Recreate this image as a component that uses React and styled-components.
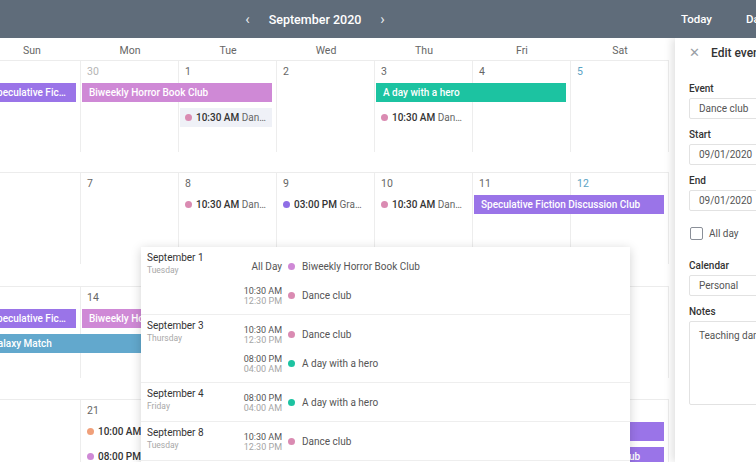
import React from 'react';
import styled, { createGlobalStyle } from 'styled-components';

const GlobalStyle = createGlobalStyle`
  html, body {
    margin: 0;
    padding: 0;
    background: #fff;
    font-family: Roboto, "Liberation Sans", Arial, sans-serif;
  }
  * {
    box-sizing: border-box;
  }
`;

const COLORS = {
  orchid: '#cf89d6',
  purple: '#9a74e8',
  green: '#1cc3a1',
  blue: '#62a8cd',
  pink: '#da8bb2',
  violet: '#8f6ee6',
  orange: '#f0a07a',
};

const Page = styled.div`
  width: 756px;
  height: 462px;
  overflow: hidden;
  position: relative;
  display: flex;
  flex-direction: column;
`;

const Header = styled.div`
  height: 38px;
  flex-shrink: 0;
  background-color: #5f6c7a;
  color: #fff;
  display: grid;
  grid-template-columns: 630px auto;
  align-items: center;
`;

const Nav = styled.div`
  justify-self: center;
  display: flex;
  align-items: center;
  gap: 15px;
`;

const NavArrow = styled.button`
  background: transparent;
  border: none;
  color: #e6eaee;
  font-family: inherit;
  font-size: 15px;
  padding: 0 4px;
  cursor: pointer;
  line-height: 1;
`;

const MonthTitle = styled.div`
  font-size: 12.5px;
  font-weight: 500;
`;

const ViewSwitch = styled.div`
  display: flex;
  gap: 34px;
  padding-left: 51px;
  white-space: nowrap;
`;

const HeaderButton = styled.span`
  font-size: 11.5px;
  font-weight: 500;
`;

const Body = styled.div`
  flex: 1;
  display: flex;
  overflow: hidden;
`;

const CalendarArea = styled.div`
  width: 675px;
  flex-shrink: 0;
  overflow: hidden;
`;

const Weeks = styled.div`
  margin-left: -17px;
  width: 686px;
`;

const DayNames = styled.div`
  display: grid;
  grid-template-columns: repeat(7, 98px);
  height: 23px;
  padding-top: 2px;
  border-bottom: 1px solid #ececec;
  align-items: center;
`;

const DayName = styled.div`
  text-align: center;
  font-size: 10.5px;
  color: #666;
`;

const WeekRow = styled.div`
  display: grid;
  grid-template-columns: repeat(7, 98px);
  grid-template-rows: 16px 19px 19px 19px;
  row-gap: 6px;
  height: ${(p) => p.height}px;
  border-bottom: 1px solid #ececec;
`;

const DayCell = styled.div`
  grid-column: ${(p) => p.col};
  grid-row: 1 / -1;
  border-right: 1px solid #ededed;
  padding: 4px 0 0 6px;
  font-size: 10.5px;
  color: ${(p) => (p.muted ? '#b5b5b5' : p.weekend ? '#5ba3c4' : '#666')};
`;

const EventBar = styled.div`
  grid-column: ${(p) => p.col} / span ${(p) => p.span || 1};
  grid-row: ${(p) => p.lane + 1};
  margin: 0 5px 0 1px;
  background-color: ${(p) => p.color};
  color: #fff;
  font-size: 10px;
  font-weight: 500;
  line-height: 19px;
  padding: 0 7px;
  white-space: nowrap;
  overflow: hidden;
  text-overflow: ellipsis;
  z-index: 1;
`;

const DotEvent = styled.div`
  grid-column: ${(p) => p.col};
  grid-row: ${(p) => p.lane + 1};
  margin: 0 5px 0 1px;
  padding: 0 4px 0 5px;
  background-color: ${(p) => (p.selected ? '#eff1f7' : 'transparent')};
  display: flex;
  align-items: center;
  gap: 4px;
  font-size: 10px;
  line-height: 19px;
  white-space: nowrap;
  overflow: hidden;
  z-index: 1;
`;

const Dot = styled.span`
  width: ${(p) => p.size || 7}px;
  height: ${(p) => p.size || 7}px;
  border-radius: 50%;
  background-color: ${(p) => p.color};
  flex-shrink: 0;
`;

const DotText = styled.span`
  overflow: hidden;
  text-overflow: ellipsis;
  color: #666;

  b {
    font-weight: 500;
    color: #333;
  }
`;

const Panel = styled.div`
  width: 260px;
  flex-shrink: 0;
  background: #fff;
  box-shadow: -3px 0 8px rgba(0, 0, 0, 0.12);
  padding: 6px 0 0 14px;
  z-index: 3;
  white-space: nowrap;
`;

const PanelTitle = styled.div`
  display: flex;
  align-items: center;
  gap: 11px;
  height: 17px;
  font-size: 12px;
  font-weight: 500;
  color: #333;
  margin-bottom: 21px;
`;

const CloseIcon = styled.span`
  color: #9aa0a6;
  font-size: 13px;
  font-weight: 300;
`;

const Field = styled.div`
  margin-bottom: ${(p) => p.gap ?? 9}px;
`;

const Label = styled.div`
  font-size: 10px;
  line-height: 13px;
  font-weight: 500;
  color: #333;
  margin-bottom: 3px;
`;

const Input = styled.div`
  height: ${(p) => p.height || 21}px;
  border: 1px solid #e2e2e2;
  border-radius: 2px;
  padding: ${(p) => (p.height ? '4px 9px' : '0 9px')};
  line-height: 19px;
  font-size: 10px;
  color: #555;
  width: 240px;
`;

const CheckRow = styled.label`
  display: flex;
  align-items: center;
  gap: 6px;
  font-size: 10px;
  color: #555;
  margin: 16px 0 19px 1px;
`;

const CheckBox = styled.span`
  width: 13px;
  height: 13px;
  border: 1.5px solid #8a8f98;
  border-radius: 2px;
`;

const Popup = styled.div`
  position: absolute;
  left: 141px;
  top: 247px;
  width: 489px;
  height: 240px;
  background: #fff;
  box-shadow: 0 2px 10px rgba(0, 0, 0, 0.18);
  z-index: 2;
`;

const DayGroup = styled.div`
  display: flex;
  padding: 5px 0 4px;
  border-bottom: 1px solid #eeeeee;
`;

const DateColumn = styled.div`
  width: 90px;
  padding: 0 0 0 6px;
  flex-shrink: 0;
`;

const DateTitle = styled.div`
  font-size: 10px;
  color: #333;
  line-height: 12px;
`;

const WeekDay = styled.div`
  font-size: 8.5px;
  color: #a8a8a8;
  line-height: 12px;
`;

const AgendaList = styled.div`
  display: flex;
  flex-direction: column;
`;

const AgendaRow = styled.div`
  height: 29px;
  display: flex;
  align-items: center;
`;

const TimeStack = styled.div`
  width: 51px;
  text-align: right;
  font-size: 9px;
  line-height: 10px;
  color: #555;

  span {
    display: block;
    color: #a5a5a5;
  }
`;

const AllDay = styled.div`
  width: 51px;
  text-align: right;
  font-size: 10px;
  color: #555;
`;

const AgendaDot = styled(Dot)`
  margin: 0 7px 0 6px;
`;

const AgendaTitle = styled.div`
  font-size: 10px;
  color: #555;
`;

const weeks = [
  {
    height: 112,
    days: [
      { n: '' },
      { n: '30', muted: true },
      { n: '1' },
      { n: '2' },
      { n: '3' },
      { n: '4' },
      { n: '5', weekend: true },
    ],
    bars: [
      { col: 1, lane: 1, color: COLORS.purple, text: 'Speculative Fiction Discussion Club' },
      { col: 2, span: 2, lane: 1, color: COLORS.orchid, text: 'Biweekly Horror Book Club' },
      { col: 5, span: 2, lane: 1, color: COLORS.green, text: 'A day with a hero' },
    ],
    dots: [
      { col: 3, lane: 2, color: COLORS.pink, time: '10:30 AM', text: 'Dance club', selected: true },
      { col: 5, lane: 2, color: COLORS.pink, time: '10:30 AM', text: 'Dance club' },
    ],
  },
  {
    height: 114,
    days: [
      { n: '' },
      { n: '7' },
      { n: '8' },
      { n: '9' },
      { n: '10' },
      { n: '11' },
      { n: '12', weekend: true },
    ],
    bars: [
      { col: 6, span: 2, lane: 1, color: COLORS.purple, text: 'Speculative Fiction Discussion Club' },
    ],
    dots: [
      { col: 3, lane: 1, color: COLORS.pink, time: '10:30 AM', text: 'Dance club' },
      { col: 4, lane: 1, color: COLORS.violet, time: '03:00 PM', text: 'Grand Galaxy Match' },
      { col: 5, lane: 1, color: COLORS.pink, time: '10:30 AM', text: 'Dance club' },
    ],
  },
  {
    height: 113,
    days: [
      { n: '' },
      { n: '14' },
      { n: '15' },
      { n: '16' },
      { n: '17' },
      { n: '18' },
      { n: '19', weekend: true },
    ],
    bars: [
      { col: 1, lane: 1, color: COLORS.purple, text: 'Speculative Fiction Discussion Club' },
      { col: 2, span: 2, lane: 1, color: COLORS.orchid, text: 'Biweekly Horror Book Club' },
      { col: 1, span: 3, lane: 2, color: COLORS.blue, text: 'Galaxy Match' },
    ],
    dots: [],
  },
  {
    height: 113,
    days: [
      { n: '' },
      { n: '21' },
      { n: '22' },
      { n: '23' },
      { n: '24' },
      { n: '25' },
      { n: '26', weekend: true },
    ],
    bars: [
      { col: 6, span: 2, lane: 1, color: COLORS.purple, text: 'Speculative Fiction Club' },
      { col: 6, span: 2, lane: 2, color: COLORS.purple, text: 'Speculative Fiction Discussion Club' },
    ],
    dots: [
      { col: 2, lane: 1, color: COLORS.orange, time: '10:00 AM', text: 'Yoga' },
      { col: 2, lane: 2, color: COLORS.orchid, time: '08:00 PM', text: 'Movie night' },
    ],
  },
];

const agenda = [
  {
    date: 'September 1',
    day: 'Tuesday',
    items: [
      { allDay: true, color: COLORS.orchid, title: 'Biweekly Horror Book Club' },
      { start: '10:30 AM', end: '12:30 PM', color: COLORS.pink, title: 'Dance club' },
    ],
  },
  {
    date: 'September 3',
    day: 'Thursday',
    items: [
      { start: '10:30 AM', end: '12:30 PM', color: COLORS.pink, title: 'Dance club' },
      { start: '08:00 PM', end: '04:00 AM', color: COLORS.green, title: 'A day with a hero' },
    ],
  },
  {
    date: 'September 4',
    day: 'Friday',
    items: [{ start: '08:00 PM', end: '04:00 AM', color: COLORS.green, title: 'A day with a hero' }],
  },
  {
    date: 'September 8',
    day: 'Tuesday',
    items: [{ start: '10:30 AM', end: '12:30 PM', color: COLORS.pink, title: 'Dance club' }],
  },
];

const dayNames = ['Sun', 'Mon', 'Tue', 'Wed', 'Thu', 'Fri', 'Sat'];

const App = () => {
  return (
    <>
      <GlobalStyle />
      <Page>
        <Header>
          <Nav>
            <NavArrow>‹</NavArrow>
            <MonthTitle>September 2020</MonthTitle>
            <NavArrow>›</NavArrow>
          </Nav>
          <ViewSwitch>
            <HeaderButton>Today</HeaderButton>
            <HeaderButton>Day</HeaderButton>
          </ViewSwitch>
        </Header>
        <Body>
          <CalendarArea>
            <Weeks>
              <DayNames>
                {dayNames.map((d) => (
                  <DayName key={d}>{d}</DayName>
                ))}
              </DayNames>
              {weeks.map((week, wi) => (
                <WeekRow key={wi} height={week.height}>
                  {week.days.map((d, i) => (
                    <DayCell key={i} col={i + 1} muted={d.muted} weekend={d.weekend}>
                      {d.n}
                    </DayCell>
                  ))}
                  {week.bars.map((b, i) => (
                    <EventBar key={'b' + i} col={b.col} span={b.span} lane={b.lane} color={b.color}>
                      {b.text}
                    </EventBar>
                  ))}
                  {week.dots.map((e, i) => (
                    <DotEvent key={'d' + i} col={e.col} lane={e.lane} selected={e.selected}>
                      <Dot color={e.color} />
                      <DotText>
                        <b>{e.time}</b> {e.text}
                      </DotText>
                    </DotEvent>
                  ))}
                </WeekRow>
              ))}
            </Weeks>
          </CalendarArea>
          <Panel>
            <PanelTitle>
              <CloseIcon>✕</CloseIcon>
              Edit event
            </PanelTitle>
            <Field>
              <Label>Event</Label>
              <Input>Dance club</Input>
            </Field>
            <Field>
              <Label>Start</Label>
              <Input>09/01/2020</Input>
            </Field>
            <Field gap={0}>
              <Label>End</Label>
              <Input>09/01/2020</Input>
            </Field>
            <CheckRow>
              <CheckBox />
              All day
            </CheckRow>
            <Field>
              <Label>Calendar</Label>
              <Input>Personal</Input>
            </Field>
            <Field>
              <Label>Notes</Label>
              <Input height={84}>Teaching dance</Input>
            </Field>
          </Panel>
        </Body>
        <Popup>
          {agenda.map((g) => (
            <DayGroup key={g.date}>
              <DateColumn>
                <DateTitle>{g.date}</DateTitle>
                <WeekDay>{g.day}</WeekDay>
              </DateColumn>
              <AgendaList>
                {g.items.map((it, i) => (
                  <AgendaRow key={i}>
                    {it.allDay ? (
                      <AllDay>All Day</AllDay>
                    ) : (
                      <TimeStack>
                        {it.start}
                        <span>{it.end}</span>
                      </TimeStack>
                    )}
                    <AgendaDot color={it.color} size={7} />
                    <AgendaTitle>{it.title}</AgendaTitle>
                  </AgendaRow>
                ))}
              </AgendaList>
            </DayGroup>
          ))}
        </Popup>
      </Page>
    </>
  );
};

export default App;
